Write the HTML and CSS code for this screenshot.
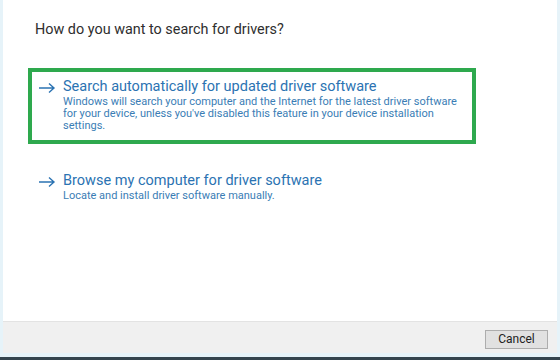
FILE: index.html
```
<!DOCTYPE html>
<html>
<head>
<meta charset="utf-8">
<link rel="stylesheet" href="styles.css">
</head>
<body>
<div class="window">
  <div class="content">
    <h1 class="heading">How do you want to search for drivers?</h1>
    <div class="options">
      <div class="option option-selected">
        <svg class="arrow" width="18" height="12" viewBox="0 0 18 12"><path d="M1 6 H16 M11 1.5 L16 6 L11 10.5" fill="none" stroke="#2b73b2" stroke-width="1.4"/></svg>
        <div class="option-text">
          <div class="option-title">Search automatically for updated driver software</div>
          <div class="option-desc">Windows will search your computer and the Internet for the latest driver software for your device, unless you've disabled this feature in your device installation settings.</div>
        </div>
      </div>
      <div class="option">
        <svg class="arrow" width="18" height="12" viewBox="0 0 18 12"><path d="M1 6 H16 M11 1.5 L16 6 L11 10.5" fill="none" stroke="#2b73b2" stroke-width="1.4"/></svg>
        <div class="option-text">
          <div class="option-title">Browse my computer for driver software</div>
          <div class="option-desc">Locate and install driver software manually.</div>
        </div>
      </div>
    </div>
  </div>
  <div class="footer">
    <button class="btn">Cancel</button>
  </div>
  <div class="edge"></div>
</div>
</body>
</html>
```
FILE: styles.css
```
html, body {
  margin: 0;
  padding: 0;
  background: #ffffff;
}
.window {
  width: 560px;
  height: 360px;
  box-sizing: border-box;
  display: flex;
  flex-direction: column;
  border-left: 3px solid #e6f3f9;
  border-right: 3px solid #e6f3f9;
  font-family: Roboto, "Open Sans", sans-serif;
  background: #ffffff;
}
.content {
  flex: 1;
  padding: 19px 0 0 32px;
}
.heading {
  margin: 0;
  font-size: 14.4px;
  font-weight: 400;
  color: #2e2e2e;
  line-height: 22px;
}
.options {
  margin-top: 27px;
  display: flex;
  flex-direction: column;
  gap: 18px;
}
.option {
  display: flex;
  align-items: flex-start;
  width: 448px;
  box-sizing: border-box;
  padding: 5px 4px 8px 6px;
  border: 4px solid transparent;
  margin-left: -7px;
}
.option-selected {
  border-color: #2ea94e;
}
.arrow {
  flex: none;
  margin-top: 5px;
  margin-right: 6px;
}
.option-title {
  font-size: 14.5px;
  line-height: 19px;
  color: #2b73b2;
  padding-left: 1px;
}
.option-desc {
  font-size: 11px;
  line-height: 12px;
  color: #3a7db5;
  padding-left: 1px;
}
.footer {
  height: 32px;
  box-sizing: border-box;
  background: #f0f0f0;
  border-top: 1px solid #e3e3e3;
  display: flex;
  justify-content: flex-end;
  align-items: center;
  padding: 3px 9px 0 0;
}
.btn {
  width: 63px;
  height: 19px;
  padding: 0;
  background: #e1e1e1;
  border: 1px solid #adadad;
  font-family: Roboto, "Open Sans", sans-serif;
  font-size: 12px;
  color: #222;
}
.edge {
  height: 4px;
  background: #e6f3f9;
  border-bottom: 3px solid #34444e;
  margin: 0 -3px;
}
```
